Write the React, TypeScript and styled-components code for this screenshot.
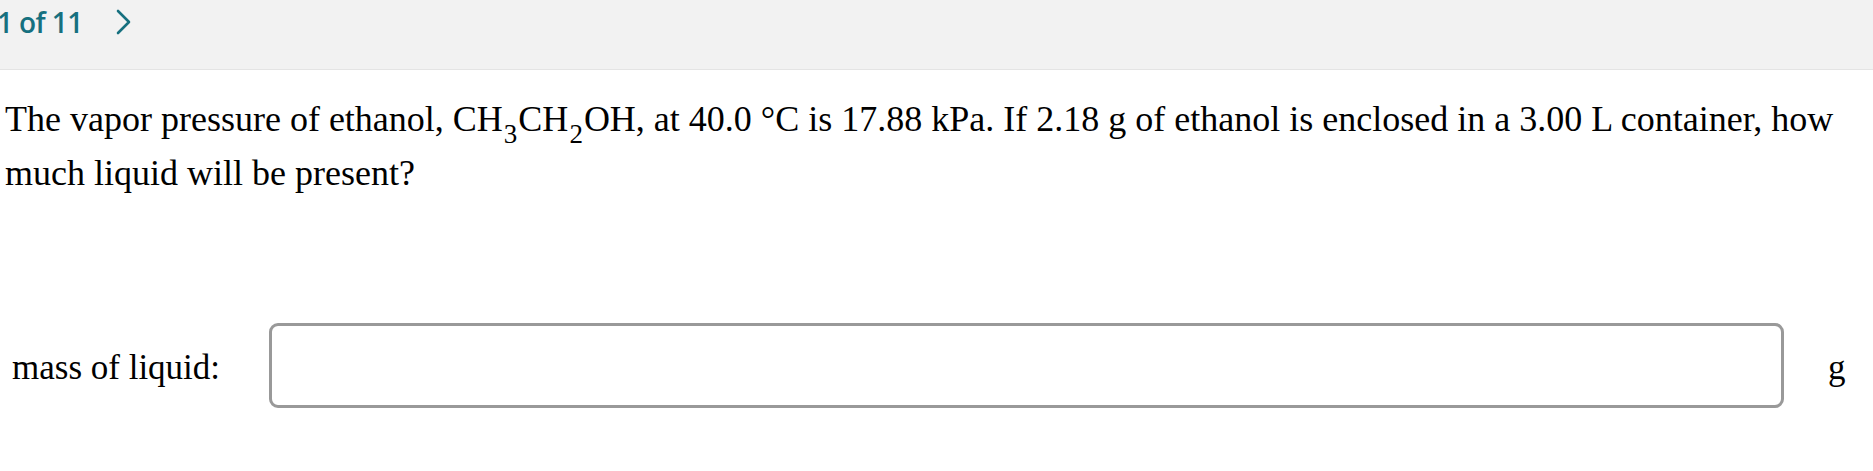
import React from "react";
import styled, { createGlobalStyle } from "styled-components";

const GlobalStyle = createGlobalStyle`
  html, body {
    margin: 0;
    padding: 0;
    background: #ffffff;
  }
  body {
    font-family: "Liberation Serif", "Times New Roman", serif;
    color: #000000;
    overflow: hidden;
  }
`;

const Page = styled.div`
  width: 1873px;
  height: 471px;
  display: flex;
  flex-direction: column;
`;

const Header = styled.header`
  height: 70px;
  box-sizing: border-box;
  background: #f2f2f2;
  border-bottom: 1px solid #e4e4e4;
  display: flex;
  align-items: flex-start;
  padding-top: 3px;
`;

const Pager = styled.nav`
  display: flex;
  align-items: center;
  gap: 33px;
  margin-left: -3px;
  font-family: "Open Sans", "Noto Sans", sans-serif;
  font-weight: 600;
  font-size: 28px;
  color: #16707f;
`;

const Count = styled.span`
  letter-spacing: -0.6px;
`;

const NextButton = styled.button`
  border: none;
  background: none;
  padding: 0;
  display: flex;
  align-items: center;
  color: #16707f;
  cursor: pointer;
`;

const Question = styled.p`
  margin: 22px 30px 0 5px;
  font-size: 36px;
  line-height: 54px;

  sub {
    font-size: 27px;
    line-height: 0;
    vertical-align: -12px;
    margin: 0 1px;
  }
`;

const AnswerRow = styled.div`
  display: flex;
  align-items: center;
  margin-top: 123px;
  padding-left: 12px;
`;

const Label = styled.label`
  font-size: 35px;
  line-height: 35px;
  width: 257px;
  flex-shrink: 0;
  padding-top: 4px;
`;

const AnswerInput = styled.input`
  width: 1515px;
  height: 85px;
  box-sizing: border-box;
  border: 3px solid #999999;
  border-radius: 9px;
  background: #ffffff;
  font-family: inherit;
  font-size: 35px;
  padding: 0 14px;
  outline: none;
`;

const Unit = styled.span`
  font-size: 35px;
  line-height: 35px;
  margin-left: 44px;
  padding-top: 4px;
`;

const ChevronRight: React.FC = () => (
  <svg width="16" height="26" viewBox="0 0 16 26" fill="none">
    <polyline
      points="2,2 13,13 2,24"
      stroke="currentColor"
      strokeWidth="2.6"
      strokeLinecap="round"
      strokeLinejoin="round"
    />
  </svg>
);

const App: React.FC = () => {
  return (
    <>
      <GlobalStyle />
      <Page>
        <Header>
          <Pager>
            <Count>1 of 11</Count>
            <NextButton aria-label="Next question">
              <ChevronRight />
            </NextButton>
          </Pager>
        </Header>
        <Question>
          The vapor pressure of ethanol, CH<sub>3</sub>CH<sub>2</sub>OH, at 40.0 °C is
          17.88 kPa. If 2.18 g of ethanol is enclosed in a 3.00 L container, how much
          liquid will be present?
        </Question>
        <AnswerRow>
          <Label htmlFor="mass">mass of liquid:</Label>
          <AnswerInput id="mass" type="text" />
          <Unit>g</Unit>
        </AnswerRow>
      </Page>
    </>
  );
};

export default App;
